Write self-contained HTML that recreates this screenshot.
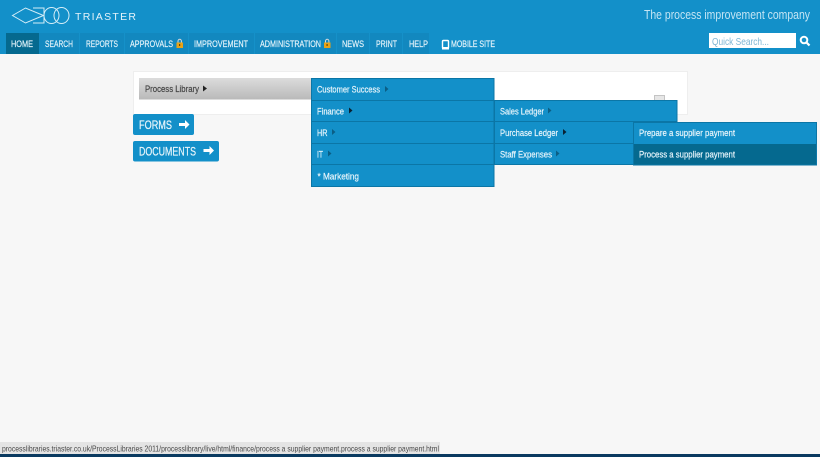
<!DOCTYPE html>
<html><head><meta charset="utf-8"><title>Triaster</title>
<style>
html,body{margin:0;padding:0;background:#f7f7f7;width:820px;height:457px;overflow:hidden}
svg{display:block}
text{font-family:"Liberation Sans",sans-serif}
.b text{stroke:currentColor;stroke-width:.2px}
</style></head><body>
<svg width="820" height="457" viewBox="0 0 820 457" xmlns="http://www.w3.org/2000/svg">
<defs><linearGradient id="g" x1="0" y1="0" x2="0" y2="1"><stop offset="0" stop-color="#dcdcdc"/><stop offset="1" stop-color="#b9b9b9"/></linearGradient></defs>
<rect width="820" height="457" fill="#f7f7f7"/>
<rect width="820" height="54" fill="#1390c9"/>
<!-- nav -->
<rect x="39" y="33" width="390" height="21" fill="#1288bf"/>
<rect x="6" y="33" width="33" height="21" fill="#05698f"/>
<g stroke="#1591c9" stroke-width="1"><path d="M79.500 33V54M124.500 33V54M188.500 33V54M254.500 33V54M336.500 33V54M369.500 33V54M402.500 33V54"/></g>
<g class="b" fill="#e4f3fa" color="#e4f3fa" font-size="9.500">
<text x="11" y="47" textLength="22" lengthAdjust="spacingAndGlyphs">HOME</text>
<text x="45" y="47" textLength="28" lengthAdjust="spacingAndGlyphs">SEARCH</text>
<text x="86" y="47" textLength="32" lengthAdjust="spacingAndGlyphs">REPORTS</text>
<text x="130" y="47" textLength="43" lengthAdjust="spacingAndGlyphs">APPROVALS</text>
<text x="194" y="47" textLength="54" lengthAdjust="spacingAndGlyphs">IMPROVEMENT</text>
<text x="260" y="47" textLength="61" lengthAdjust="spacingAndGlyphs">ADMINISTRATION</text>
<text x="342" y="47" textLength="22" lengthAdjust="spacingAndGlyphs">NEWS</text>
<text x="376" y="47" textLength="21" lengthAdjust="spacingAndGlyphs">PRINT</text>
<text x="409" y="47" textLength="19" lengthAdjust="spacingAndGlyphs">HELP</text>
<text x="451" y="47" textLength="44" lengthAdjust="spacingAndGlyphs">MOBILE SITE</text>
</g>
<!-- locks -->
<g><rect x="176.500" y="42.500" width="6.500" height="5.500" fill="#e8a317"/><path d="M178 42.500V41a1.700 1.700 0 0 1 3.400 0V42.500" fill="none" stroke="#d9d9d9" stroke-width="1"/><rect x="179" y="44" width="1.200" height="2" fill="#6b4a00"/></g>
<g transform="translate(147.500 0)"><rect x="176.500" y="42.500" width="6.500" height="5.500" fill="#e8a317"/><path d="M178 42.500V41a1.700 1.700 0 0 1 3.400 0V42.500" fill="none" stroke="#d9d9d9" stroke-width="1"/><rect x="179" y="44" width="1.200" height="2" fill="#6b4a00"/></g>
<!-- phone -->
<rect x="442.500" y="40.500" width="6" height="8" rx="1" fill="none" stroke="#fff" stroke-width="1.400"/><rect x="442" y="47" width="7" height="2.500" fill="#fff"/>
<!-- logo -->
<g fill="none" stroke="#d6eef8" stroke-width="1">
<path d="M12.500 15.500L25.500 8L43.500 15.500L25.500 23Z"/>
<path d="M33 8H44V23H33"/>
<ellipse cx="51.500" cy="15.500" rx="7.500" ry="8"/>
<ellipse cx="61.500" cy="15.500" rx="7.500" ry="8"/>
</g>
<text x="75" y="20" fill="#e4f3fa" font-size="10.500" textLength="61" lengthAdjust="spacing">TRIASTER</text>
<!-- tagline -->
<text x="644" y="19" fill="#c4e5f4" font-size="12.500" textLength="166" lengthAdjust="spacingAndGlyphs">The process improvement company</text>
<!-- search -->
<rect x="709" y="33" width="87" height="15" fill="#fff"/>
<text x="712" y="45" fill="#7fb6d4" font-size="10.500" textLength="57" lengthAdjust="spacingAndGlyphs">Quick Search...</text>
<circle cx="804" cy="40" r="3.300" fill="none" stroke="#fff" stroke-width="2"/>
<path d="M806.500 42.500L809.500 45.500" stroke="#fff" stroke-width="2.200"/>
<!-- panel -->
<rect x="133.500" y="71.500" width="554" height="43" fill="#fff" stroke="#eeeeee"/>
<rect x="139" y="78" width="173" height="21.500" fill="url(#g)"/>
<g class="b" fill="#444" color="#444"><text x="145" y="92" font-size="9.500" textLength="54" lengthAdjust="spacingAndGlyphs">Process Library</text></g>
<path d="M203 85.500L207 88.500L203 91.500Z" fill="#222"/>
<!-- broken image -->
<rect x="654.500" y="95.500" width="10" height="6" fill="#e6e6e6" stroke="#c4c4c4"/>
<!-- buttons -->
<rect x="133" y="114" width="61" height="21" rx="2" fill="#1390c9"/>
<rect x="133" y="141" width="86" height="20.500" rx="2" fill="#1390c9"/>
<g class="b" fill="#eaf6fb" color="#eaf6fb" font-size="11.500">
<text x="139" y="129" textLength="33" lengthAdjust="spacingAndGlyphs">FORMS</text>
<text x="139" y="155.500" textLength="57" lengthAdjust="spacingAndGlyphs">DOCUMENTS</text>
</g>
<path d="M179 123H185V120L189.500 124.500L185 129V126H179Z" fill="#fff"/>
<path d="M203.500 149H209.500V146L214 150.500L209.500 155V152H203.500Z" fill="#fff"/>
<!-- L1 -->
<rect x="311" y="78" width="183" height="109" fill="#1390c9"/>
<g stroke="#0b76a6" fill="none"><rect x="311.500" y="78.500" width="182.500" height="108"/>
<path d="M311 100.500H494M311 121.500H494M311 143.500H494M311 164.500H494"/></g>
<!-- L2 -->
<rect x="494" y="100" width="183" height="65" fill="#1390c9"/>
<g stroke="#0b76a6" fill="none"><rect x="494.500" y="100.500" width="182.500" height="64"/>
<path d="M494 121.500H677M494 143.500H677"/></g>
<!-- L3 -->
<rect x="633" y="122" width="184" height="43" fill="#1390c9"/>
<rect x="633" y="144" width="184" height="21" fill="#05698f"/>
<rect x="633.500" y="122.500" width="183" height="42.500" fill="none" stroke="#0b76a6"/>
<g class="b" fill="#e8f5fb" color="#e8f5fb" font-size="9.500">
<text x="317" y="92.500" textLength="63" lengthAdjust="spacingAndGlyphs">Customer Success</text>
<text x="317" y="114.500" textLength="27" lengthAdjust="spacingAndGlyphs">Finance</text>
<text x="317" y="136" textLength="10.500" lengthAdjust="spacingAndGlyphs">HR</text>
<text x="317" y="157.500" textLength="6" lengthAdjust="spacingAndGlyphs">IT</text>
<text x="317.500" y="179.500" textLength="41.500" lengthAdjust="spacingAndGlyphs">* Marketing</text>
<text x="500" y="114.500" textLength="44" lengthAdjust="spacingAndGlyphs">Sales Ledger</text>
<text x="500" y="136" textLength="58" lengthAdjust="spacingAndGlyphs">Purchase Ledger</text>
<text x="500" y="157.500" textLength="52" lengthAdjust="spacingAndGlyphs">Staff Expenses</text>
<text x="639" y="136" textLength="96" lengthAdjust="spacingAndGlyphs">Prepare a supplier payment</text>
<text x="639" y="157.500" textLength="96" lengthAdjust="spacingAndGlyphs">Process a supplier payment</text>
</g>
<g fill="#0b5f86">
<path d="M385 86L388.500 89L385 92Z"/>
<path d="M332 129L335.500 132L332 135Z"/>
<path d="M328 150.500L331.500 153.500L328 156.500Z"/>
<path d="M548 107.500L551.500 110.500L548 113.500Z"/>
<path d="M556 150.500L559.500 153.500L556 156.500Z"/>
</g>
<g fill="#0a2233">
<path d="M349 107.500L352.500 110.500L349 113.500Z"/>
<path d="M563 129L566.500 132L563 135Z"/>
</g>
<!-- status bar -->
<rect x="0" y="442" width="440" height="12" fill="#e4e4e4"/>
<text x="2" y="451.500" fill="#4a4a4a" font-size="8.500" textLength="437" lengthAdjust="spacingAndGlyphs">processlibraries.triaster.co.uk/ProcessLibraries 2011/processlibrary/live/html/finance/process a supplier payment.process a supplier payment.html</text>
<rect x="0" y="454" width="820" height="3" fill="#0a3a60"/>
</svg>
</body></html>
